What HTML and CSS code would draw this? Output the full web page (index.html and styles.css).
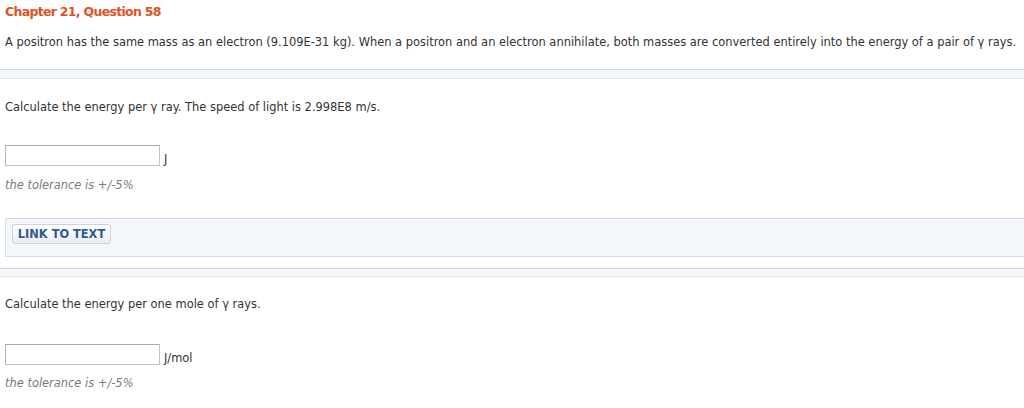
FILE: index.html
```html
<!DOCTYPE html>
<html lang="en">
<head>
<meta charset="utf-8">
<title>Chapter 21, Question 58</title>
<link rel="stylesheet" href="styles.css">
</head>
<body>
<div class="page">
  <div class="intro">
    <h2 class="title">Chapter 21, Question 58</h2>
    <p class="stem">A positron has the same mass as an electron (9.109E-31 kg). When a positron and an electron annihilate, both masses are converted entirely into the energy of a pair of γ rays.</p>
  </div>
  <div class="divider"></div>
  <div class="part part-first">
    <p class="prompt">Calculate the energy per γ ray. The speed of light is 2.998E8 m/s.</p>
    <div class="answer-row">
      <input class="answer" type="text">
      <span class="unit">J</span>
    </div>
    <p class="tolerance">the tolerance is +/-5%</p>
    <div class="resource-box">
      <button class="link-btn" type="button">LINK TO TEXT</button>
    </div>
  </div>
  <div class="divider divider-second"></div>
  <div class="part part-second">
    <p class="prompt">Calculate the energy per one mole of γ rays.</p>
    <div class="answer-row answer-row-second">
      <input class="answer" type="text">
      <span class="unit">J/mol</span>
    </div>
    <p class="tolerance tolerance-second">the tolerance is +/-5%</p>
  </div>
</div>
</body>
</html>
```
FILE: styles.css
```css
html, body {
  margin: 0;
  padding: 0;
  background: #ffffff;
}
body {
  font-family: "DejaVu Sans", Verdana, sans-serif;
  font-size: 11.45px;
  color: #333333;
  overflow: hidden;
}
.page {
  width: 1024px;
}
.intro {
  padding: 4px 5px 0 5px;
}
.title {
  margin: 0;
  font-size: 12.5px;
  letter-spacing: -0.7px;
  line-height: 16px;
  font-weight: bold;
  color: #e0531f;
}
.stem {
  margin: 14px 0 0 0;
  line-height: 16px;
  white-space: nowrap;
}
.divider {
  margin-top: 19px;
  height: 8px;
  border-top: 1px solid #cdd5e0;
  border-bottom: 1px solid #dde3ea;
  background: #f3f6fa;
}
.divider-second {
  margin-top: 11px;
  height: 7px;
}
.part {
  padding: 0 0 0 5px;
}
.prompt {
  margin: 20px 0 0 0;
  line-height: 16px;
}
.part-second .prompt {
  margin-top: 19px;
}
.answer-row {
  margin-top: 30px;
  display: flex;
  align-items: flex-end;
  height: 21px;
}
.answer-row-second {
  margin-top: 32px;
}
.answer {
  box-sizing: border-box;
  width: 155px;
  height: 21px;
  margin: 0;
  padding: 0 3px;
  border: 1px solid #c4c4c4;
  border-top-color: #a9a9a9;
  border-left-color: #b3b3b3;
  background: #ffffff;
  font: inherit;
}
.unit {
  margin-left: 4px;
  line-height: 14px;
}
.tolerance {
  margin: 11px 0 0 0;
  line-height: 16px;
  font-style: italic;
  color: #7a7a7a;
}
.tolerance-second {
  margin-top: 10px;
}
.resource-box {
  margin: 25px -10px 0 0;
  box-sizing: border-box;
  height: 39px;
  padding: 5px 6px 0 6px;
  border: 1px solid #d8dee6;
  border-top-color: #cfd7e2;
  background: #f3f6fa;
}
.link-btn {
  box-sizing: border-box;
  height: 20px;
  width: 99px;
  margin: 0;
  padding: 0;
  border: 1px solid #cdd3db;
  border-radius: 3px;
  background: linear-gradient(#ffffff, #e9edf2);
  font-family: "DejaVu Sans", Verdana, sans-serif;
  font-size: 11.4px;
  font-weight: bold;
  color: #2f5a94;
  line-height: 18px;
}
```
